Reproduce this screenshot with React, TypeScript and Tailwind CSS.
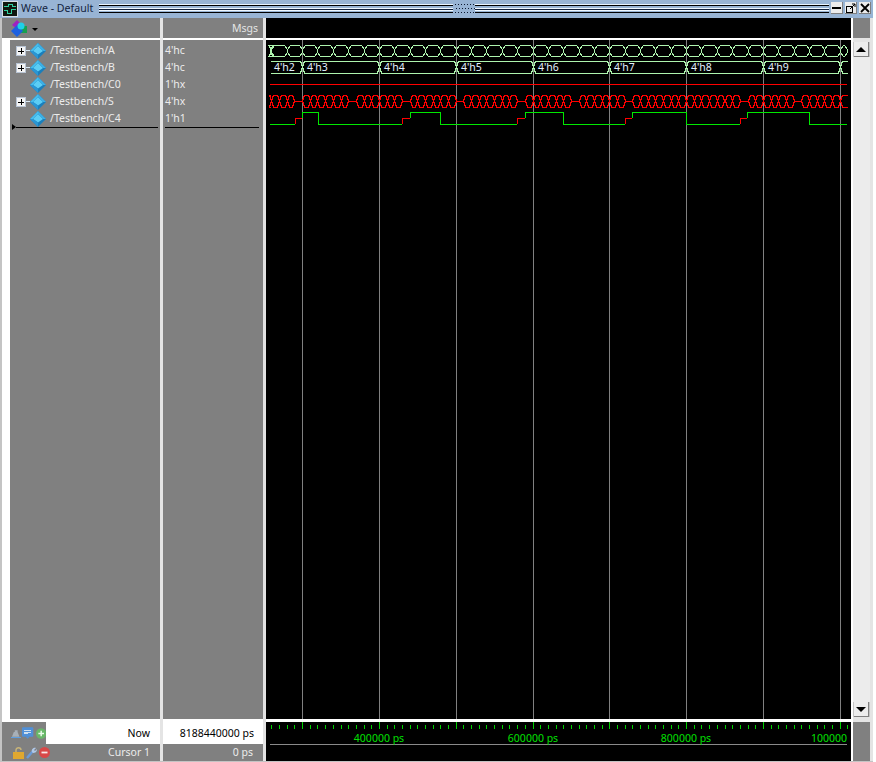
import React from 'react';

const UI_FONT = "font-['Noto_Sans',sans-serif]";

const signals = [
  { name: '/Testbench/A', value: "4'hc", bus: true },
  { name: '/Testbench/B', value: "4'hc", bus: true },
  { name: '/Testbench/C0', value: "1'hx", bus: false },
  { name: '/Testbench/S', value: "4'hx", bus: true },
  { name: '/Testbench/C4', value: "1'h1", bus: false },
];

const GRID = 76.8;
const ORIGIN = 302.6; // 300000 ps
const START = 270;
const END = 847;

const px = (x: number) => Math.floor(x) + 0.5;
const gridXs = Array.from({ length: 8 }, (_, i) => px(ORIGIN + i * GRID));

// one bus cell with chamfered corners; the cell cut off by the trace ends stays open
const cell = (x0: number, x1: number, top: number, bottom: number, c = 2) => {
  const mid = (top + bottom) / 2;
  const a = px(Math.max(x0, START));
  const b = px(Math.min(x1, END));
  const left = x0 <= START ? `M${a} ${top}` : `M${a} ${mid}L${a + c} ${top}`;
  const right = x1 >= END ? `L${b} ${top}M${b} ${bottom}` : `L${b - c} ${top}L${b} ${mid}L${b - c} ${bottom}`;
  const back = x0 <= START ? `L${a} ${bottom}` : `L${a + c} ${bottom}L${a} ${mid}`;
  return `${left}${right}${back}`;
};

// the fast A bus: narrow octagons that share a short upright at each change
const busA = () => {
  const step = GRID / 5;
  let d = '';
  for (let x = ORIGIN - step * 3; x < END; x += step) {
    const a = px(Math.max(x, START));
    const b = px(Math.min(x + step, END));
    d += `M${a} 49.5L${a + 3} 45.5H${b - 3}L${b} 49.5V52.5L${b - 3} 56.5H${a + 3}L${a} 52.5Z`;
  }
  return d;
};

const busB = () => {
  const edges = [START, ...Array.from({ length: 8 }, (_, i) => ORIGIN + i * GRID), END];
  let d = '';
  for (let i = 0; i < edges.length - 1; i++) d += cell(edges[i], edges[i + 1], 61, 73, 2);
  return d;
};

// 10000 ps units from the 300000 line where S sits on its flat line
const flatUnits = [-1, 6, 13, 20, 28, 35, 42, 57, 64];

const busS = () => {
  const u = GRID / 10;
  let d = '';
  for (let i = -5; i < 72; i++) {
    const x0 = ORIGIN + i * u;
    const x1 = x0 + u;
    if (x1 <= START || x0 >= END) continue;
    if (flatUnits.includes(i)) {
      d += `M${px(x0)} 101.5L${px(x1)} 101.5`;
    } else {
      d += cell(x0, x1, 95, 107, 2);
    }
  }
  return d;
};

const carryGreen =
  'M270 124.5H295 M302.5 118V112.5H318.5V124.5H402 M410.5 118V112.5H440.5V124.5H517 M525.5 118V112.5H563.5V124.5H625 M632.5 118V112.5H686.5V124.5H740 M747.5 118V112.5H809.5V124.5H847';
const carryRed =
  'M295.5 124V118.5H302 M402.5 124V118.5H410 M517.5 124V118.5H525 M625.5 124V118.5H632 M740.5 124V118.5H747';

const busLabels = [
  { x: 274, t: "4'h2" },
  { x: 307, t: "4'h3" },
  { x: 384, t: "4'h4" },
  { x: 461, t: "4'h5" },
  { x: 538, t: "4'h6" },
  { x: 614, t: "4'h7" },
  { x: 691, t: "4'h8" },
  { x: 768, t: "4'h9" },
];

const WaveTraces = () => (
  <svg width={585} height={679} viewBox="266 40 585 679" className="block">
    <g stroke="#808080" strokeWidth={1} shapeRendering="crispEdges">
      {gridXs.map((x) => (
        <line key={x} x1={x} x2={x} y1={40} y2={719} />
      ))}
    </g>
    <g shapeRendering="crispEdges">
      <path d={busA()} fill="none" stroke="#aef4ae" strokeWidth={1} />
      <path d={busB()} fill="none" stroke="#aef4ae" strokeWidth={1} />
    </g>
    {busLabels.map((l) => (
      <text key={l.x} x={l.x} y={71} fontSize={10.5} fill="#e4f0ff" fontFamily="Noto Sans, sans-serif">
        {l.t}
      </text>
    ))}
    <line x1={270} x2={847} y1={84.5} y2={84.5} stroke="#ff0000" shapeRendering="crispEdges" />
    <path d={busS()} fill="none" stroke="#ff0000" strokeWidth={1} shapeRendering="crispEdges" />
    <path d={carryGreen} fill="none" stroke="#00e800" shapeRendering="crispEdges" />
    <path d={carryRed} fill="none" stroke="#ff0000" shapeRendering="crispEdges" />
  </svg>
);

const Ruler = () => {
  const ticks = [];
  for (let i = -4; i <= 71; i++) {
    const x = px(ORIGIN + (i * GRID) / 10);
    ticks.push(<line key={i} x1={x} x2={x} y1={i % 10 === 0 ? 722 : 725} y2={729} stroke="#00d000" />);
  }
  return (
    <svg width={585} height={39} viewBox="266 722 585 39" className="block">
      <g shapeRendering="crispEdges">{ticks}</g>
      <line x1={270} x2={847} y1={744.5} y2={744.5} stroke="#8a8a8a" shapeRendering="crispEdges" />
      {[
        { x: 379, t: '400000 ps' },
        { x: 533, t: '600000 ps' },
        { x: 686, t: '800000 ps' },
      ].map((l) => (
        <text key={l.x} x={l.x} y={742} textAnchor="middle" fontSize={10.5} fill="#00e000" fontFamily="Noto Sans, sans-serif">
          {l.t}
        </text>
      ))}
      <text x={847} y={742} textAnchor="end" fontSize={10.5} fill="#00e000" fontFamily="Noto Sans, sans-serif">
        100000
      </text>
    </svg>
  );
};

const Diamond = () => (
  <svg width={16} height={16} viewBox="0 0 16 16" className="block shrink-0">
    <path d="M8 0L16 8L8 16L0 8Z" fill="#1a7fbc" />
    <path d="M8 3L13 8L8 11.5L3 8Z" fill="#5ccdf4" />
    <path d="M8 0L16 8L13 8L8 3Z" fill="#3cb0e6" />
    <path d="M8 0L0 8L3 8L8 3Z" fill="#46bcec" />
    <path d="M0 8L8 16L8 11.5L3 8Z" fill="#2a96d4" />
  </svg>
);

const PlusBox = () => (
  <svg width={14} height={10} viewBox="0 0 14 10" className="block shrink-0">
    <rect x={0.5} y={0.5} width={9} height={9} fill="#f4f4f4" stroke="#b8c4d4" />
    <path d="M2 5H8M5 2V8" stroke="#000" strokeWidth={1} shapeRendering="crispEdges" />
    <path d="M10 4.5H14" stroke="#d8e8f4" shapeRendering="crispEdges" />
  </svg>
);

const SignalRow = ({ name, bus }: { name: string; bus: boolean }) => (
  <div className="flex items-center h-[17px] pl-[6px]">
    <div className="w-[14px]">{bus && <PlusBox />}</div>
    <Diamond />
    <span className="ml-[4px] text-[10.5px] leading-none text-[#ececec]">{name}</span>
  </div>
);

const PaletteIcon = () => (
  <svg width={17} height={17} viewBox="0 0 17 17" className="block">
    <path d="M6 0L11 5L6 9L1 5Z" fill="#a020c0" />
    <rect x={9} y={6} width={7} height={7} fill="#18a050" />
    <path d="M6 5L12 11L6 17L0 11Z" fill="#1c60e0" />
    <circle cx={10} cy={6} r={3.5} fill="#20d0e8" />
  </svg>
);

const GripLines = () => (
  <div className="flex-1 flex flex-col">
    <div className="h-[4px]" />
    <div className="h-px bg-[#e8f4ff]" />
    <div className="h-px bg-[#000000]" />
    <div className="h-[2px]" />
    <div className="h-px bg-[#f0f8ff]" />
    <div className="h-px bg-[#10203c]" />
    <div className="h-px bg-[#f0f8ff]" />
    <div className="h-[1px]" />
    <div className="h-px bg-[#000000]" />
  </div>
);

const GripDots = () => (
  <svg width={22} height={12} viewBox="0 0 22 12" className="block mt-[3px] shrink-0">
    {[1, 5, 9].map((y, r) =>
      [0, 1, 2, 3, 4, 5, 6].map((i) => (
        <rect key={`${r}-${i}`} x={2 + i * 3 + (r % 2 ? 1 : 0)} y={y} width={1} height={1} fill="#0c1830" />
      ))
    )}
  </svg>
);

const WinButton = ({ children }: { children: React.ReactNode }) => (
  <div className="w-[12px] h-[12px] bg-[#ececec] border-b border-r border-[#808080] flex items-center justify-center">{children}</div>
);

const TitleBar = () => (
  <div className={`flex items-start h-[18px] bg-[#98b4d4] pl-[2px] pr-[2px] ${UI_FONT}`}>
    <svg width={16} height={16} viewBox="0 0 16 16" className="block shrink-0 mt-px">
      <rect x={0.5} y={0.5} width={15} height={15} fill="#101810" stroke="#d8e0e8" />
      <path d="M2 5H6V3H10V5H14M2 9H5V12H9V8H14" fill="none" stroke="#30d0a0" shapeRendering="crispEdges" />
    </svg>
    <span className="ml-[3px] text-[10.6px] leading-[16px] text-[#142440] whitespace-nowrap w-[78px]">Wave - Default</span>
    <GripLines />
    <GripDots />
    <GripLines />
    <div className="flex gap-[2px] ml-[2px] mt-[2px]">
      <WinButton>
        <div className="w-[9px] h-[2px] bg-black" />
      </WinButton>
      <WinButton>
        <svg width={10} height={10} viewBox="0 0 10 10" className="block">
          <rect x={0.5} y={3.5} width={6} height={6} fill="none" stroke="#000" shapeRendering="crispEdges" />
          <path d="M4 6L9 1M6 1H9V4" fill="none" stroke="#000" />
        </svg>
      </WinButton>
      <WinButton>
        <svg width={10} height={10} viewBox="0 0 10 10" className="block">
          <path d="M1 1L9 9M9 1L1 9" stroke="#000" strokeWidth={1.8} />
        </svg>
      </WinButton>
    </div>
  </div>
);

const NowIcons = () => (
  <div className="flex items-center gap-px w-[36px] h-full bg-[#808080] pl-px">
    <svg width={11} height={11} viewBox="0 0 11 11" className="block">
      <path d="M1 9L3 4H4V2H7V4L9 9Z" fill="#a8b0b8" />
      <path d="M0 10H11" stroke="#5aa0e8" shapeRendering="crispEdges" />
    </svg>
    <svg width={12} height={12} viewBox="0 0 12 12" className="block">
      <rect width={12} height={10} rx={1} fill="#5090d8" />
      <path d="M2 3H10M2 5H10M2 7H6" stroke="#d8e4f0" shapeRendering="crispEdges" />
      <path d="M4 10H8L6 12Z" fill="#5090d8" />
    </svg>
    <svg width={11} height={11} viewBox="0 0 11 11" className="block ml-px">
      <circle cx={5.5} cy={5.5} r={5.5} fill="#68b868" />
      <path d="M2.5 5.5H8.5M5.5 2.5V8.5" stroke="#e8f8e8" strokeWidth={1.6} />
    </svg>
  </div>
);

const CursorIcons = () => (
  <div className="flex items-center gap-[2px] pl-[3px]">
    <svg width={11} height={12} viewBox="0 0 11 12" className="block">
      <path d="M3 6V3C3 0 8 0 8 3" fill="none" stroke="#c8b478" strokeWidth={1.4} />
      <rect y={5} width={11} height={7} fill="#e0a830" />
    </svg>
    <svg width={11} height={12} viewBox="0 0 11 12" className="block">
      <path d="M1 11L7 4" stroke="#6a9ad8" strokeWidth={2.4} />
      <path d="M6 5C5 2 8 0 10 1L8 3L9 4L11 2C11 5 9 6 7 6Z" fill="#b0c8e8" />
    </svg>
    <svg width={11} height={11} viewBox="0 0 11 11" className="block">
      <circle cx={5.5} cy={5.5} r={5.5} fill="#d84848" />
      <path d="M2.5 5.5H8.5" stroke="#f8e8e8" strokeWidth={1.8} />
    </svg>
  </div>
);

const ScrollButton = ({ up }: { up: boolean }) => (
  <div className="w-[15px] h-[15px] mx-px bg-[#ececec] border-b border-r border-[#808080] flex items-center justify-center">
    <div
      className={
        up
          ? 'w-0 h-0 border-x-[5px] border-x-transparent border-b-[5px] border-b-black'
          : 'w-0 h-0 border-x-[5px] border-x-transparent border-t-[5px] border-t-black'
      }
    />
  </div>
);

export default function App() {
  return (
    <div className={`w-[876px] h-[762px] bg-white overflow-hidden ${UI_FONT}`}>
      <div className="w-[873px] h-full flex flex-col bg-[#c4c4c4]">
        <TitleBar />
        <div className="flex-1 flex min-h-0 pb-px">
          {/* names */}
          <div className="w-[158px] ml-[2px] flex flex-col">
            <div className="h-[20px] bg-[#808080] flex items-center pl-[9px]">
              <PaletteIcon />
              <div className="ml-[4px] mt-[2px] w-0 h-0 border-x-[3px] border-x-transparent border-t-[3px] border-t-black" />
            </div>
            <div className="h-[2px] bg-white" />
            <div className="flex-1 flex min-h-0">
              <div className="w-[8px] bg-white" />
              <div className="flex-1 bg-[#808080] pt-[2px]">
                {signals.map((s) => (
                  <SignalRow key={s.name} name={s.name} bus={s.bus} />
                ))}
                <div className="flex items-center -mt-[3px] ml-[2px]">
                  <div className="w-0 h-0 border-y-[3px] border-y-transparent border-l-[4px] border-l-black" />
                  <div className="w-[142px] h-px bg-black" />
                </div>
              </div>
            </div>
            <div className="h-[3px] bg-white" />
            <div className="h-[22px] bg-white flex items-center">
              <div className="w-[8px] h-full bg-[#808080]" />
              <NowIcons />
              <span className="flex-1 text-right pr-[10px] text-[10.5px] leading-none text-black">Now</span>
            </div>
            <div className="h-[17px] bg-[#808080] flex items-center">
              <div className="w-[8px]" />
              <CursorIcons />
              <span className="flex-1 text-right pr-[10px] text-[10.5px] leading-none text-[#ececec]">Cursor 1</span>
            </div>
          </div>
          <div className="w-[3px] bg-[#e4e4e4]" />
          {/* values */}
          <div className="w-[100px] flex flex-col">
            <div className="h-[20px] bg-[#808080] flex items-center justify-end pr-[5px]">
              <span className="text-[10.5px] leading-none text-[#e4e4e4]">Msgs</span>
            </div>
            <div className="h-[2px] bg-white" />
            <div className="flex-1 bg-[#808080] pt-[2px] pl-[2px] min-h-0">
              {signals.map((s) => (
                <div key={s.name} className="h-[17px] flex items-center text-[10.5px] leading-none text-[#ececec]">
                  {s.value}
                </div>
              ))}
              <div className="w-[94px] h-px bg-black" />
            </div>
            <div className="h-[3px] bg-white" />
            <div className="h-[22px] bg-white flex items-center justify-end pr-[9px] text-[10.5px] leading-none text-black">8188440000 ps</div>
            <div className="h-[17px] bg-[#808080] flex items-center justify-end pr-[10px] text-[10.5px] leading-none text-[#ececec]">0 ps</div>
          </div>
          <div className="w-[3px] bg-[#e4e4e4]" />
          {/* waves */}
          <div className="w-[585px] flex flex-col">
            <div className="h-[20px] bg-black" />
            <div className="h-[2px] bg-white" />
            <div className="flex-1 min-h-0 bg-black overflow-hidden">
              <WaveTraces />
            </div>
            <div className="h-[3px] bg-white" />
            <div className="h-[39px] bg-black overflow-hidden">
              <Ruler />
            </div>
          </div>
          {/* scrollbar */}
          <div className="w-[2px] bg-white" />
          <div className="w-[17px] flex flex-col">
            <div className="h-[20px] bg-[#808080]" />
            <div className="h-[4px] bg-[#e4e4e4]" />
            <ScrollButton up />
            <div className="flex-1 bg-[#ececec]" />
            <ScrollButton up={false} />
            <div className="h-[5px] bg-[#e4e4e4]" />
            <div className="h-[39px] bg-[#808080]" />
          </div>
          <div className="flex-1 bg-[#e4e4e4]" />
        </div>
      </div>
    </div>
  );
}
